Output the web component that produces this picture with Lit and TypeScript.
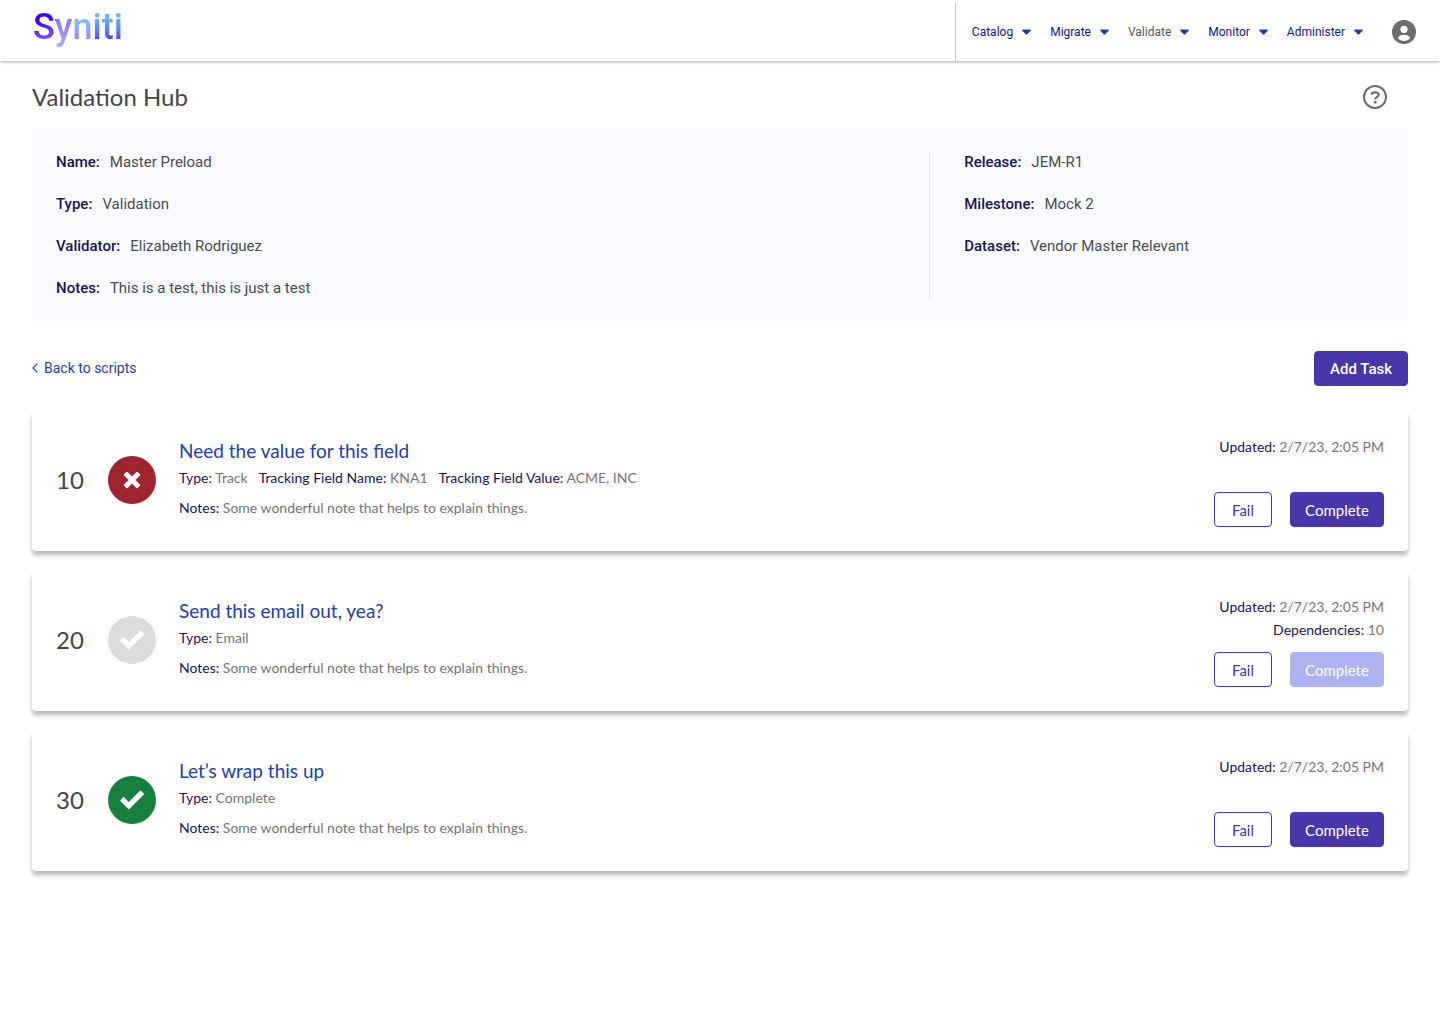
import { LitElement, html, css, svg, nothing } from "lit";
import { customElement, property } from "lit/decorators.js";

type Status = "failed" | "waiting" | "done";
interface Field {
  label: string;
  value: string;
}
interface Task {
  order: number;
  status: Status;
  title: string;
  fields: Field[];
  notes: string;
  updated: string;
  dependencies?: string;
}

const MENUS = ["Catalog", "Migrate", "Validate", "Monitor", "Administer"];
const CURRENT_MENU = "Validate";

const DETAILS: Field[] = [
  { label: "Name", value: "Master Preload" },
  { label: "Type", value: "Validation" },
  { label: "Validator", value: "Elizabeth Rodriguez" },
  { label: "Notes", value: "This is a test, this is just a test" },
];
const RELEASE: Field[] = [
  { label: "Release", value: "JEM-R1" },
  { label: "Milestone", value: "Mock 2" },
  { label: "Dataset", value: "Vendor Master Relevant" },
];

const NOTE = "Some wonderful note that helps to explain things.";
const TASKS: Task[] = [
  {
    order: 10,
    status: "failed",
    title: "Need the value for this field",
    fields: [
      { label: "Type", value: "Track" },
      { label: "Tracking Field Name", value: "KNA1" },
      { label: "Tracking Field Value", value: "ACME, INC" },
    ],
    notes: NOTE,
    updated: "2/7/23, 2:05 PM",
  },
  {
    order: 20,
    status: "waiting",
    title: "Send this email out, yea?",
    fields: [{ label: "Type", value: "Email" }],
    notes: NOTE,
    updated: "2/7/23, 2:05 PM",
    dependencies: "10",
  },
  {
    order: 30,
    status: "done",
    title: "Let’s wrap this up",
    fields: [{ label: "Type", value: "Complete" }],
    notes: NOTE,
    updated: "2/7/23, 2:05 PM",
  },
];

const buttonStyles = css`
  button {
    font: inherit;
    color: inherit;
    margin: 0;
    padding: 0;
    border: 0;
    background: none;
    cursor: pointer;
  }
  .btn {
    box-sizing: border-box;
    height: 35px;
    padding: 0 14px;
    border: 1px solid #4936a8;
    border-radius: 4px;
    font-size: 15px;
    line-height: 20px;
  }
  .primary {
    min-width: 94px;
    background: #4936a8;
    color: #fff;
  }
  .primary:disabled {
    background: #aeb3f1;
    border-color: #aeb3f1;
    cursor: default;
  }
  .outline {
    min-width: 58px;
    background: #fff;
    color: #4936a8;
  }
`;

@customElement("top-bar")
class TopBar extends LitElement {
  static styles = [
    buttonStyles,
    css`
      :host {
        display: block;
      }
      .bar {
        display: flex;
        justify-content: space-between;
        height: 61px;
        background: #fff;
        box-shadow: 0 1px 3px rgba(0, 0, 0, 0.35);
      }
      .logo {
        align-self: center;
        margin-left: 33px;
        padding-bottom: 8px;
        font: 500 36px/44px Roboto, sans-serif;
        text-decoration: none;
        color: transparent;
        background:
          linear-gradient(160deg, #4209f0 30%, #9a6cf6 80%) 0 0 / 23px 100% no-repeat,
          linear-gradient(180deg, #8a80fb 35%, #c9a8fb 90%) 23px 0 / 18px 100% no-repeat,
          linear-gradient(180deg, #86b4fb 40%, #8b86f6 75%) 41px 0 / 20px 100% no-repeat,
          linear-gradient(180deg, #6db4fd 25%, #5a6cf5 55%, #5028e4 75%) 61px 0 / 40px 100% no-repeat;
        -webkit-background-clip: text;
        background-clip: text;
      }
      .right {
        display: flex;
        align-items: center;
        margin-top: 3px;
        padding: 0 24px 0 16px;
        border-left: 1px solid #c4c4c4;
      }
      nav {
        display: flex;
        gap: 19px;
        margin-right: 29px;
        font: 12px/16px Roboto, sans-serif;
      }
      .menu {
        display: flex;
        align-items: center;
        gap: 9px;
        color: #0d1682;
      }
      .menu.current {
        color: #55565a;
      }
      .caret {
        width: 9px;
        height: 6px;
        fill: #1e3a9e;
      }
      .avatar {
        display: block;
        width: 24px;
        height: 24px;
      }
    `,
  ];

  render() {
    return html`
      <header class="bar">
        <a class="logo" href="#">Syniti</a>
        <div class="right">
          <nav aria-label="Main">
            ${MENUS.map(
              (name) => html`
                <button type="button" class="menu ${name === CURRENT_MENU ? "current" : ""}">
                  ${name}
                  <svg class="caret" viewBox="0 0 9 6" aria-hidden="true">
                    <path d="M.9 .5h7.2c.7 0 1 .7.5 1.2L5.200 5.300a1 1 0 0 1-1.400 0L.4 1.700C-.1 1.200.2.500.9.500z" />
                  </svg>
                </button>
              `,
            )}
          </nav>
          <button type="button" aria-label="Account">
            <svg class="avatar" viewBox="0 0 24 24">
              <circle cx="12" cy="12" r="12" fill="#6a6d6b" />
              <circle cx="12" cy="9.300" r="3.600" fill="#fff" />
              <path
                d="M5.800 18.300c.4-2.300 3.200-3.500 6.200-3.500s5.800 1.200 6.200 3.500c-1.500 1.600-3.700 2.600-6.200 2.600s-4.700-1-6.200-2.600z"
                fill="#fff"
              />
            </svg>
          </button>
        </div>
      </header>
    `;
  }
}

@customElement("detail-panel")
class DetailPanel extends LitElement {
  static styles = css`
    :host {
      display: block;
    }
    .panel {
      display: grid;
      grid-template-columns: 48fr 25fr;
      padding: 24px 24px 22px;
      border-radius: 0 0 4px 4px;
      background: #fafbff;
      font: 15px/21px Roboto, sans-serif;
      color: #4a4b4d;
    }
    dl {
      display: flex;
      flex-direction: column;
      gap: 21px;
      margin: 0;
    }
    .side {
      padding-left: 34px;
      border-left: 1px solid #e2e3e8;
    }
    .row {
      display: flex;
      gap: 10px;
    }
    dt {
      font-weight: 500;
      color: #1c1452;
    }
    dd {
      margin: 0;
    }
  `;

  private list(fields: Field[], cls: string) {
    return html`<dl class=${cls}>
      ${fields.map((f) => html`<div class="row"><dt>${f.label}:</dt><dd>${f.value}</dd></div>`)}
    </dl>`;
  }

  render() {
    return html`<section class="panel">${this.list(DETAILS, "main")}${this.list(RELEASE, "side")}</section>`;
  }
}

const CHECK = svg`<path d="M12.900 24.400l2.700-2.700 5.200 5.200 11.800-11.700 2.700 2.700-14.500 14.500z" fill="#fff" stroke="#fff" stroke-width="1.400" stroke-linejoin="round" />`;
const CROSS = svg`<g fill="#fff">
  <rect x="14.300" y="21.500" width="19.400" height="5" rx="1" transform="rotate(45 24 24)" />
  <rect x="14.300" y="21.500" width="19.400" height="5" rx="1" transform="rotate(-45 24 24)" />
</g>`;

@customElement("task-card")
class TaskCard extends LitElement {
  @property({ attribute: false }) task!: Task;

  static styles = [
    buttonStyles,
    css`
      :host {
        display: block;
      }
      .card {
        display: flex;
        box-sizing: border-box;
        min-height: 140px;
        padding: 24px 24px 26px;
        border-radius: 4px;
        background: #fff;
        box-shadow: 0 4px 4px rgba(0, 0, 0, 0.28);
        font: 14px/20px Lato, sans-serif;
        color: #737576;
      }
      .order {
        align-self: center;
        width: 28px;
        margin-right: 24px;
        font-size: 24px;
        line-height: 30px;
        color: #444547;
      }
      .status {
        align-self: center;
        flex: none;
        width: 48px;
        height: 48px;
        margin-right: 23px;
      }
      .failed {
        fill: #9f2530;
      }
      .waiting {
        fill: #dcdddf;
      }
      .done {
        fill: #18803f;
      }
      .body {
        flex: 1;
        padding-top: 4px;
      }
      h2 {
        margin: 0 0 5px;
        font-size: 19px;
        font-weight: 400;
        line-height: 24px;
      }
      h2 a {
        color: #2341a0;
        text-decoration: none;
      }
      p {
        margin: 0;
      }
      .fields {
        display: flex;
        flex-wrap: wrap;
        gap: 11px;
        margin-bottom: 10px;
      }
      .label {
        color: #1c1452;
      }
      .aside {
        display: flex;
        flex-direction: column;
        justify-content: space-between;
        align-items: flex-end;
        padding-top: 2px;
        margin-bottom: -2px;
      }
      .facts {
        display: flex;
        flex-direction: column;
        align-items: flex-end;
        gap: 3px;
      }
      .actions {
        display: flex;
        gap: 18px;
      }
    `,
  ];

  private field(label: string, value: string) {
    return html`<p><span class="label">${label}:</span> ${value}</p>`;
  }

  render() {
    const t = this.task;
    return html`
      <article class="card">
        <span class="order">${t.order}</span>
        <svg class="status" viewBox="0 0 48 48" role="img" aria-label=${t.status}>
          <circle class=${t.status} cx="24" cy="24" r="24" />
          ${t.status === "failed" ? CROSS : CHECK}
        </svg>
        <div class="body">
          <h2><a href="#">${t.title}</a></h2>
          <div class="fields">${t.fields.map((f) => this.field(f.label, f.value))}</div>
          ${this.field("Notes", t.notes)}
        </div>
        <div class="aside">
          <div class="facts">
            ${this.field("Updated", t.updated)}
            ${t.dependencies ? this.field("Dependencies", t.dependencies) : nothing}
          </div>
          <div class="actions">
            <button type="button" class="btn outline">Fail</button>
            <button type="button" class="btn primary" ?disabled=${t.status === "waiting"}>Complete</button>
          </div>
        </div>
      </article>
    `;
  }
}

@customElement("app-root")
class AppRoot extends LitElement {
  static styles = [
    buttonStyles,
    css`
      :host {
        display: block;
        min-height: 100vh;
        background: #fff;
      }
      main {
        padding: 20px 32px 32px;
      }
      .heading {
        display: flex;
        justify-content: space-between;
        align-items: center;
        margin-bottom: 15px;
        padding-right: 21px;
      }
      h1 {
        margin: 0;
        font: 24px/32px Lato, sans-serif;
        color: #444547;
      }
      .help {
        display: block;
        width: 24px;
        height: 24px;
      }
      .toolbar {
        display: flex;
        justify-content: space-between;
        align-items: center;
        margin: 30px 0 25px;
        font: 14px/20px Roboto, sans-serif;
      }
      .back {
        display: flex;
        align-items: center;
        gap: 6px;
        padding-bottom: 2px;
        color: #2341a0;
        text-decoration: none;
      }
      .chevron {
        width: 6px;
        height: 10px;
      }
      .add {
        font-weight: 500;
      }
      .tasks {
        display: flex;
        flex-direction: column;
        gap: 20px;
      }
    `,
  ];

  render() {
    return html`
      <top-bar></top-bar>
      <main>
        <div class="heading">
          <h1>Validation Hub</h1>
          <button type="button" aria-label="Help">
            <svg class="help" viewBox="0 0 24 24" fill="none" stroke="#6a6d6b" stroke-width="2">
              <circle cx="12" cy="12" r="11" />
              <path d="M8.500 9.700c.2-1.600 1.600-2.400 3.500-2.400 2.200 0 3.700.9 3.700 2.500 0 2.200-3.500 2.100-3.500 4.700" stroke-width="2.200" />
              <circle cx="12.200" cy="17.300" r="1.400" fill="#6a6d6b" stroke="none" />
            </svg>
          </button>
        </div>
        <detail-panel></detail-panel>
        <div class="toolbar">
          <a class="back" href="#">
            <svg class="chevron" viewBox="0 0 6 10" aria-hidden="true">
              <path d="M5.300 .7L1 5l4.300 4.300" fill="none" stroke="#2341a0" stroke-width="1.200" />
            </svg>
            Back to scripts
          </a>
          <button type="button" class="btn primary add">Add Task</button>
        </div>
        <div class="tasks">${TASKS.map((t) => html`<task-card .task=${t}></task-card>`)}</div>
      </main>
    `;
  }
}
